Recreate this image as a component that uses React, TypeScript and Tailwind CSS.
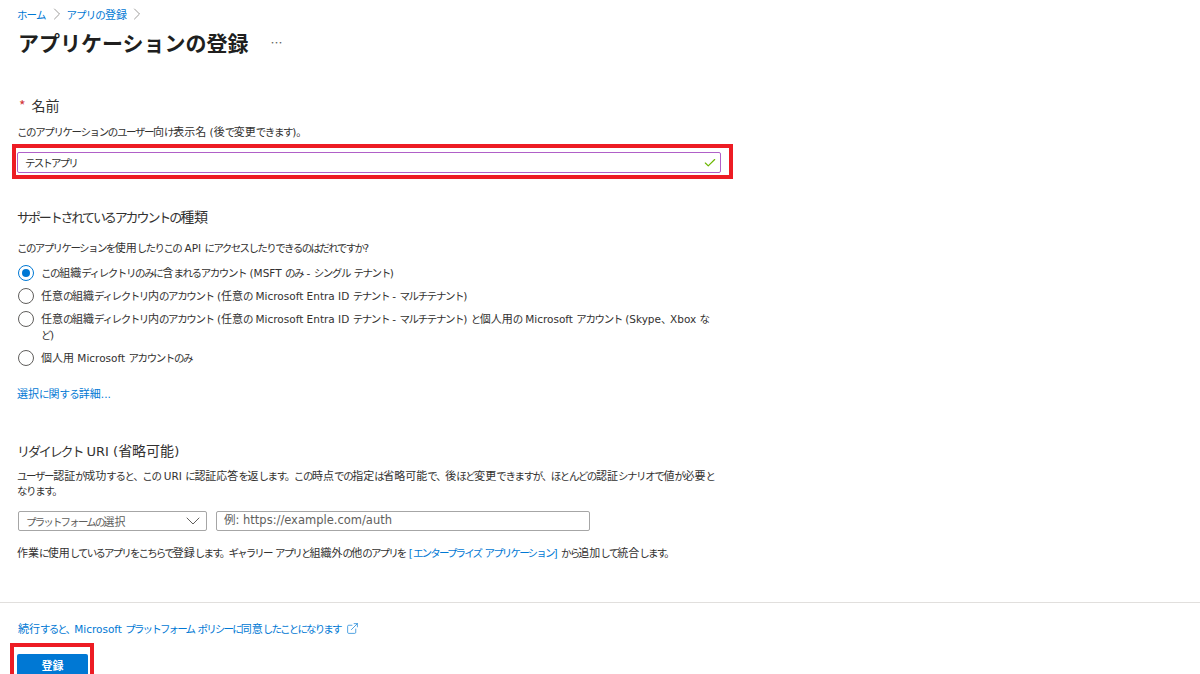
import { Check, ChevronDown, ChevronRight, ExternalLink } from 'lucide-react'

function runs(text: string) {
  return text.split(/([\u3001-\u30ff]+|[\x20-\x7e]+)/).filter(Boolean)
}

const KANA = 'text-[10.5px] tracking-[-1.4px]'
const KANA_MID = 'text-[10.5px] tracking-[-1.6px]'
const KANA_TIGHT = 'text-[10.5px] tracking-[-1.85px]'
const KANA_WIDE = 'text-[10.5px] tracking-[-0.9px]'

function T({ children, kana = KANA }: { children: string; kana?: string }) {
  return (
    <>
      {runs(children).map((r, i) =>
        /^[\u3001-\u30ff]/.test(r) ? (
          <span key={i} className={`leading-none ${kana}`}>{r}</span>
        ) : /^[\x20-\x7e]/.test(r) ? (
          <span key={i} className='text-[10.5px] leading-none [font-family:"DejaVu_Sans",sans-serif]'>{r}</span>
        ) : (
          <span key={i} className="text-[11px] leading-none">{r}</span>
        ),
      )}
    </>
  )
}

function H({ children }: { children: string }) {
  return (
    <h2 className="h-[20px] leading-[20px]">
      {runs(children).map((r, i) =>
        /^[\u3001-\u30ff]/.test(r) ? (
          <span key={i} className="text-[13px] leading-none tracking-[-2.1px]">{r}</span>
        ) : /^[\x20-\x7e]/.test(r) ? (
          <span key={i} className='text-[13px] leading-none [font-family:"DejaVu_Sans",sans-serif]'>{r}</span>
        ) : (
          <span key={i} className="text-[14px] leading-none">{r}</span>
        ),
      )}
    </h2>
  )
}

function Radio({ checked, children }: { checked?: boolean; children: string }) {
  return (
    <div className="flex items-start gap-[7px]">
      <span
        className={`ml-[1px] flex h-4 w-4 shrink-0 items-center justify-center rounded-full border ${
          checked ? 'border-[#0078d4]' : 'border-[#605e5c]'
        }`}
      >
        {checked && <span className="h-2 w-2 rounded-full bg-[#0078d4]" />}
      </span>
      <span className="-mt-[1px] mb-[1px] leading-[16px] text-[#323130]">
        <T>{children}</T>
      </span>
    </div>
  )
}

export default function App() {
  return (
    <div className='flex h-[674px] w-[1200px] flex-col overflow-hidden bg-white text-[11px] text-[#323130] [font-family:"Noto_Sans_CJK_JP",sans-serif]'>
      <main className="h-[602px] shrink-0 px-[17px]">
        <nav className="flex h-[28px] items-center text-[#0078d4]">
          <a><T kana={KANA_WIDE}>ホーム</T></a>
          <ChevronRight className="ml-[1px] h-5 w-5 text-[#8a8886]" strokeWidth={1} />
          <a><T kana={KANA_WIDE}>アプリの登録</T></a>
          <ChevronRight className="h-5 w-5 text-[#8a8886]" strokeWidth={1} />
        </nav>

        <div className="flex h-[30px] items-center">
          <h1 className="ml-[1px] text-[21px] font-bold text-[#201f1e]">アプリケーションの登録</h1>
          <span className="ml-[22px] text-[12px] leading-none text-[#605e5c]">…</span>
        </div>

        <div className="mt-[37px] flex h-[20px] items-center text-[14px]">
          <span className="mr-[6px] ml-[2px] text-[#d13438]">*</span>
          <span>名前</span>
        </div>
        <p className="mt-[8px] h-[16px] leading-[16px]">
          <T>このアプリケーションのユーザー向け表示名 (後で変更できます)。</T>
        </p>

        <div className="relative mt-[13px] w-[704px]">
          <div className="flex h-[21px] items-center justify-between rounded-[2px] border border-[#b060c8] pr-[3px] pl-[7px]">
            <span><T kana={KANA_TIGHT}>テストアプリ</T></span>
            <Check className="h-[14px] w-[14px] text-[#6bb700]" strokeWidth={2} />
          </div>
          <div className="pointer-events-none absolute -top-[8px] -right-[12px] -bottom-[6px] -left-[5px] border-[4px] border-[#ed1c24]" />
        </div>

        <div className="mt-[34px]">
          <H>サポートされているアカウントの種類</H>
        </div>
        <p className="mt-[12px] h-[16px] leading-[16px]">
          <T kana={KANA_MID}>このアプリケーションを使用したりこの API にアクセスしたりできるのはだれですか?</T>
        </p>

        <div className="mt-[10px] flex w-[704px] flex-col gap-[7px]">
          <Radio checked>この組織ディレクトリのみに含まれるアカウント (MSFT のみ - シングル テナント)</Radio>
          <Radio>任意の組織ディレクトリ内のアカウント (任意の Microsoft Entra ID テナント - マルチテナント)</Radio>
          <Radio>任意の組織ディレクトリ内のアカウント (任意の Microsoft Entra ID テナント - マルチテナント) と個人用の Microsoft アカウント (Skype、Xbox など)</Radio>
          <Radio>個人用 Microsoft アカウントのみ</Radio>
        </div>

        <a className="mt-[19px] block h-[16px] leading-[16px] text-[#0078d4]">
          <T kana={KANA_WIDE}>選択に関する詳細...</T>
        </a>

        <div className="mt-[40px]">
          <H>リダイレクト URI (省略可能)</H>
        </div>
        <p className="mt-[7px] w-[704px] leading-[15px]">
          <T>ユーザー認証が成功すると、この URI に認証応答を返します。この時点での指定は省略可能で、後ほど変更できますが、ほとんどの認証シナリオで値が必要となります。</T>
        </p>

        <div className="mt-[13px] flex gap-[9px]">
          <div className="ml-[1px] flex h-[20px] w-[189px] items-center justify-between rounded-[2px] border border-[#a6a6a6] pr-[1px] pl-[7px] text-[#605e5c]">
            <span><T kana={KANA_TIGHT}>プラットフォームの選択</T></span>
            <ChevronDown className="h-6 w-6 shrink-0 text-[#605e5c]" strokeWidth={1} />
          </div>
          <div className='flex h-[20px] w-[374px] items-center rounded-[2px] border border-[#a6a6a6] pl-[7px] text-[11.5px] text-[#605e5c] [font-family:"DejaVu_Sans","Noto_Sans_CJK_JP",sans-serif]'>
            例: https://example.com/auth
          </div>
        </div>

        <p className="mt-[13px] leading-[16px]">
          <T kana={KANA_TIGHT}>作業に使用しているアプリをこちらで登録します。ギャラリー アプリと組織外の他のアプリを </T>
          <a className="text-[#0078d4]"><T kana={KANA_TIGHT}>[エンタープライズ アプリケーション]</T></a>
          <T kana={KANA_TIGHT}> から追加して統合します。</T>
        </p>
      </main>

      <footer className="flex-1 border-t border-[#e1dfdd] px-[18px]">
        <div className="mt-[17px] flex h-[16px] items-center text-[#0078d4]">
          <a><T kana={KANA_TIGHT}>続行すると、Microsoft プラットフォーム ポリシーに同意したことになります</T></a>
          <ExternalLink className="ml-[5px] h-[13px] w-[13px]" strokeWidth={1.25} />
        </div>
        <div className="relative mt-[18px] -ml-[1px] w-[71px]">
          <button className="flex h-[22px] w-[71px] items-center justify-center rounded-[2px] bg-[#0078d4] text-[11px] font-bold text-white">
            登録
          </button>
          <div className="pointer-events-none absolute -top-[11px] -right-[6px] -bottom-[6px] -left-[7px] border-[4px] border-[#ed1c24]" />
        </div>
      </footer>
    </div>
  )
}
